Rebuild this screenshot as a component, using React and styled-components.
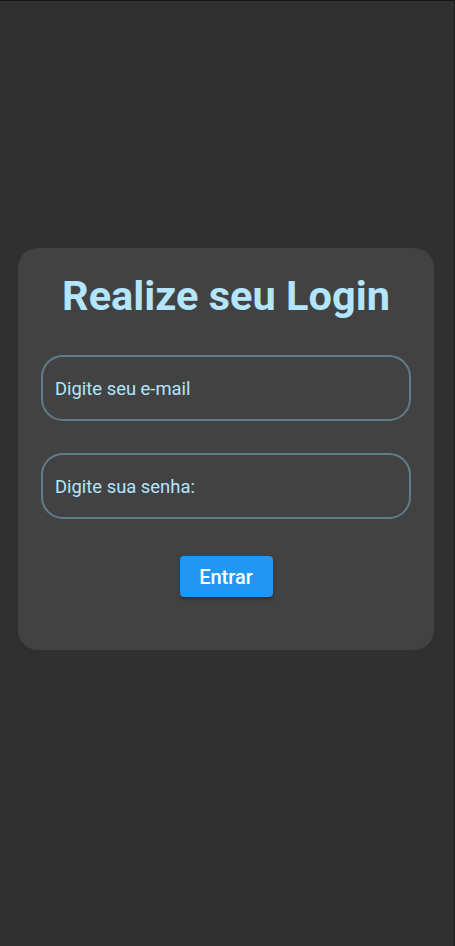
import React from 'react'
import styled, { createGlobalStyle } from 'styled-components'

const GlobalStyle = createGlobalStyle`
  html, body {
    margin: 0;
    padding: 0;
    background: #303030;
    font-family: Roboto, "Noto Sans", "Liberation Sans", sans-serif;
  }
  * { box-sizing: border-box; }
`

const Page = styled.div`
  min-height: 946px;
  border-top: 1px solid #161616;
  border-right: 1px solid #1c1c1c;
  padding: 247px 20px 0 18px;
`

const Card = styled.form`
  background: #424242;
  border-radius: 20px;
  padding: 24px 23px 53px;
  display: flex;
  flex-direction: column;
  align-items: stretch;
`

const Title = styled.h1`
  margin: 0 0 35px;
  font-size: 41.5px;
  line-height: 48px;
  font-weight: 700;
  color: #b3e5fc;
  text-align: center;
`

const Field = styled.input`
  height: 66px;
  width: 100%;
  border: 2px solid #5f7d8b;
  border-radius: 22px;
  background: transparent;
  padding: 0 12px;
  margin-bottom: ${p => p.$gap}px;
  font-family: inherit;
  font-size: 18.4px;
  color: #b3e5fc;
  outline: none;

  &::placeholder {
    color: #b3e5fc;
    opacity: 1;
  }
`

const Button = styled.button`
  align-self: center;
  width: 93px;
  height: 41px;
  border: none;
  border-radius: 4px;
  background: #2196f3;
  color: #ffffff;
  font-family: inherit;
  font-size: 20px;
  font-weight: 500;
  box-shadow: 0 2px 3px rgba(0, 0, 0, 0.35);
  cursor: pointer;
`

export default function App() {
  return (
    <>
      <GlobalStyle />
      <Page>
        <Card onSubmit={e => e.preventDefault()}>
          <Title>Realize seu Login</Title>
          <Field type="email" placeholder="Digite seu e-mail" $gap={32} />
          <Field type="password" placeholder="Digite sua senha:" $gap={37} />
          <Button type="submit">Entrar</Button>
        </Card>
      </Page>
    </>
  )
}
